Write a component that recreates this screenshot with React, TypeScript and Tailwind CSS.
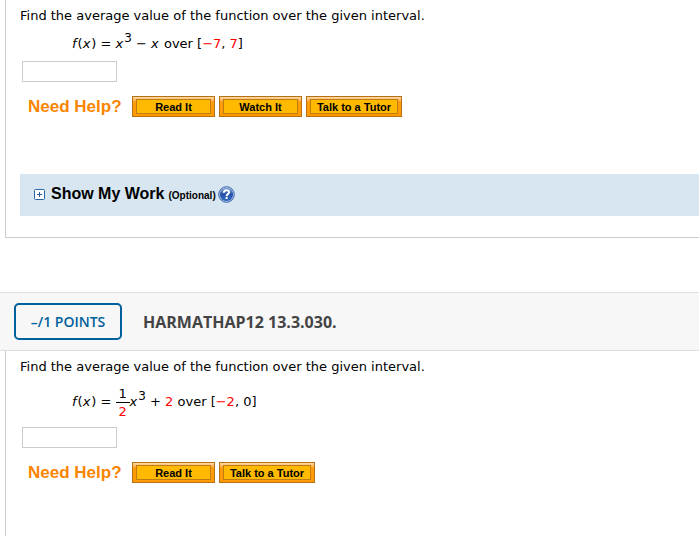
import type { ReactNode } from "react";

function Var({ children }: { children: ReactNode }) {
  return <i className="mr-px">{children}</i>;
}

function Red({ children }: { children: ReactNode }) {
  return <span className="text-[#ff0000]">{children}</span>;
}

function Cube() {
  return <span className="relative -top-1.5 text-xs leading-none">3</span>;
}

function HelpButton({ label, wide = false }: { label: string; wide?: boolean }) {
  return (
    <button
      type="button"
      className={`flex h-[21px] border border-[#b87014] bg-linear-to-b from-[#ffdca8] via-[#ff9d0a] via-25% to-[#ff9900] px-[3px] pt-0.5 pb-[2px] ${wide ? "w-24" : "w-[83px]"}`}
    >
      <span className="flex h-[15px] flex-1 items-center justify-center border border-[#c07c10] bg-[#ffba00] pt-0.5 font-['Liberation_Sans',Arial,sans-serif] text-[11px] leading-[13px] font-bold whitespace-nowrap text-black">
        {label}
      </span>
    </button>
  );
}

function NeedHelp({ children }: { children: ReactNode }) {
  return (
    <div className="mt-3.5 flex h-[21px] items-center pl-2">
      <span className="w-26 font-['Liberation_Sans',Arial,sans-serif] text-[17px] leading-5 font-bold whitespace-nowrap text-[#f98500]">
        Need Help?
      </span>
      <div className="flex gap-1">{children}</div>
    </div>
  );
}

function Answer({ label }: { label: string }) {
  return (
    <input
      type="text"
      aria-label={label}
      className="ml-0.5 block h-[21px] w-[95px] border border-[#cccccc] bg-white px-1 outline-none"
    />
  );
}

function Prompt() {
  return <p className="leading-4">Find the average value of the function over the given interval.</p>;
}

function HelpIcon() {
  return (
    <svg width="17" height="17" viewBox="0 0 17 17" aria-hidden="true">
      <defs>
        <linearGradient id="help-fill" x1="0" y1="0" x2="0" y2="1">
          <stop offset="0" stopColor="#7199d8" />
          <stop offset="0.5" stopColor="#2452a8" />
          <stop offset="1" stopColor="#356cc4" />
        </linearGradient>
      </defs>
      <circle cx="8.5" cy="8.5" r="7.8" fill="#b9cce8" stroke="#3a62a8" />
      <circle cx="8.5" cy="8.5" r="6.6" fill="url(#help-fill)" />
      <path d="M5.8 6.8C5.8 3.4 11.1 3.4 11.1 6.3C11.1 8.2 8.6 8.1 8.6 10.2" fill="none" stroke="white" strokeWidth="2" />
      <rect x="7.6" y="11" width="2" height="2" fill="white" />
    </svg>
  );
}

export default function App() {
  return (
    <main className="min-h-screen overflow-x-hidden bg-white font-[Verdana,'DejaVu_Sans',sans-serif] text-[13px] text-black">
      <section className="ml-[5px] border-b border-l border-[#cccccc] pt-2 pb-[21px] pl-3.5">
        <Prompt />
        <p className="mt-3 mb-2.5 ml-[52px] h-[15px] leading-4 whitespace-nowrap">
          <Var>f</Var>(<Var>x</Var>) = <Var>x</Var><Cube /> − <Var>x</Var> over [<Red>−7</Red>, <Red>7</Red>]
        </p>
        <Answer label="Average value of x cubed minus x" />
        <NeedHelp>
          <HelpButton label="Read It" />
          <HelpButton label="Watch It" />
          <HelpButton label="Talk to a Tutor" wide />
        </NeedHelp>
        <div className="mt-[57px] flex h-[42px] items-center bg-[#d8e6f1] pb-0.5 pl-3.5 font-['Liberation_Sans',Arial,sans-serif] font-bold">
          <button type="button" aria-label="Expand Show My Work" className="mr-1.5">
            <svg width="11" height="11" viewBox="0 0 11 11" aria-hidden="true">
              <rect x="0.5" y="0.5" width="10" height="10" rx="1" fill="white" stroke="#2567a8" />
              <path d="M3 5.5H8M5.5 3V8" stroke="#2a5f9e" />
            </svg>
          </button>
          <div className="flex items-baseline gap-1 whitespace-nowrap">
            <h2 className="text-base leading-5">Show My Work</h2>
            <span className="text-[10px]">(Optional)</span>
          </div>
          <button type="button" aria-label="Help" className="ml-0.5">
            <HelpIcon />
          </button>
        </div>
      </section>

      <header className="mt-[54px] flex h-[59px] items-center border-y border-[#dddddd] bg-[#f7f7f7] pl-3.5 font-['Open_Sans',sans-serif]">
        <span className="flex h-[37px] w-27 items-center justify-center rounded-[5px] border-2 border-[#00609c] text-sm font-semibold text-[#00609c]">
          –/1 POINTS
        </span>
        <h2 className="ml-[21px] text-base font-bold text-[#444444]">HARMATHAP12 13.3.030.</h2>
      </header>

      <section className="ml-[5px] min-h-[185px] border-l border-[#cccccc] pt-2 pl-3.5">
        <Prompt />
        <div className="mt-2.5 mb-2 ml-[52px] flex h-[34px] items-center whitespace-pre">
          <span><Var>f</Var>(<Var>x</Var>) = </span>
          <span className="flex w-3.5 flex-col text-center leading-[17px]">
            <span className="border-b border-black">1</span>
            <Red>2</Red>
          </span>
          <span><Var>x</Var><Cube /> + <Red>2</Red> over [<Red>−2</Red>, 0]</span>
        </div>
        <Answer label="Average value of one half x cubed plus 2" />
        <NeedHelp>
          <HelpButton label="Read It" />
          <HelpButton label="Talk to a Tutor" wide />
        </NeedHelp>
      </section>
    </main>
  );
}
